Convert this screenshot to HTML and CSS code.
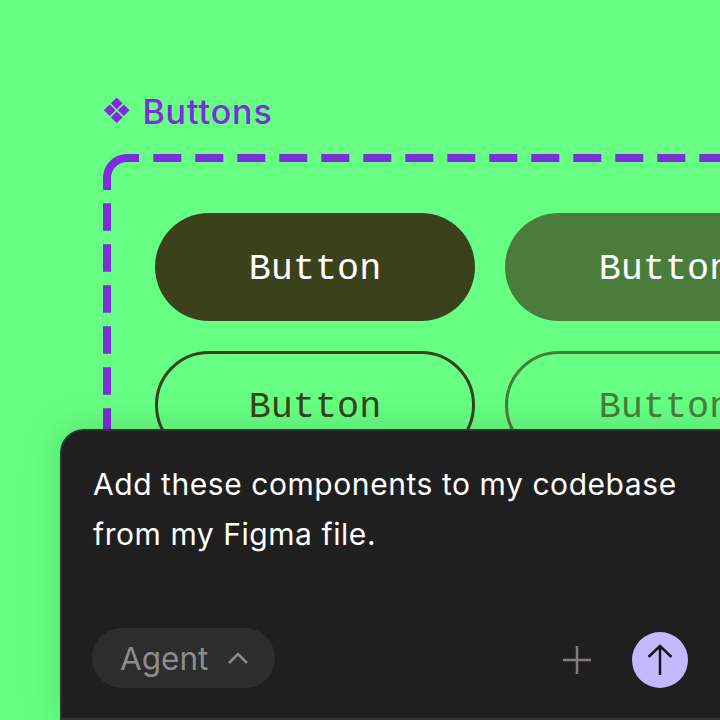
FILE: index.html
```html
<!DOCTYPE html>
<html lang="en">
<head>
    <meta charset="UTF-8">
    <meta name="viewport" content="width=device-width, initial-scale=1.0">
    <title>Buttons</title>
    <link rel="stylesheet" href="styles.css">
</head>
<body>

    <!-- Figma canvas -->
    <main class="canvas">
        <h2 class="frame-label"><span class="frame-icon">❖</span>Buttons</h2>

        <section class="frame">
            <svg class="frame-border" width="800" height="500" aria-hidden="true" fill="none" stroke="#7f2cdb" stroke-width="8">
                <path d="M4 36 V24 A20 20 0 0 1 24 4 H36"/>
                <path d="M50.300 4 H800" stroke-dasharray="28 14"/>
                <path d="M4 49.300 V500" stroke-dasharray="27.500 13.500"/>
            </svg>
            <div class="button-grid">
                <button class="btn btn-solid">Button</button>
                <button class="btn btn-solid btn-disabled">Button</button>
                <button class="btn btn-outline">Button</button>
                <button class="btn btn-outline btn-disabled">Button</button>
            </div>
        </section>
    </main>

    <!-- Chat prompt box -->
    <div class="prompt">
        <p class="prompt-text">Add these components to my codebase from my Figma file.</p>
        <div class="prompt-bar">
            <div class="agent-pill">
                Agent
                <svg width="20" height="12" viewBox="0 0 20 12" fill="none" stroke="#8c8c8c" stroke-width="2.5">
                    <path d="M1 11 L10 2 L19 11"/>
                </svg>
            </div>
            <div class="prompt-actions">
                <svg width="28" height="28" viewBox="0 0 28 28" stroke="#857b7b" stroke-width="2.500">
                    <path d="M14 0 V28 M0 14 H28"/>
                </svg>
                <button class="send-btn">
                    <svg width="26" height="32" viewBox="0 0 26 32" fill="none" stroke="#151515" stroke-width="2.500">
                        <path d="M1.500 13 L13 2 L24.500 13 M13 2 V31"/>
                    </svg>
                </button>
            </div>
        </div>
    </div>

</body>
</html>
```

FILE: styles.css
```css
html, body {
    margin: 0;
    height: 100%;
    overflow: hidden;
}

body {
    background-color: #66ff83;
    font-family: "Inter", "Liberation Sans", sans-serif;
}

.canvas {
    padding: 91px 0 0 103px;
}

.frame-label {
    margin: 0 0 23px 0;
    display: flex;
    align-items: center;
    gap: 10px;
    height: 40px;
    color: #7f2cdb;
    font-size: 34px;
    font-weight: 500;
    letter-spacing: 0.9px;
}

.frame-icon {
    margin-left: -2px;
    font-family: "DejaVu Sans", sans-serif;
    font-size: 35px;
    font-weight: 400;
    letter-spacing: 0;
}

.frame {
    position: relative;
    width: 800px;
    height: 500px;
    box-sizing: border-box;
    padding: 59px 0 0 52px;
}

.frame-border {
    position: absolute;
    top: 0;
    left: 0;
}

.button-grid {
    display: grid;
    grid-template-columns: 320px 320px;
    grid-auto-rows: 108px;
    gap: 30px;
}

.btn {
    border-radius: 54px;
    font-family: "Liberation Mono", monospace;
    font-size: 36.8px;
    box-sizing: border-box;
    padding: 4px 0 0 0;
}

.btn-solid {
    background-color: #3b421b;
    color: #ffffff;
    border: none;
}

.btn-solid.btn-disabled {
    background-color: #4a7d3c;
}

.btn-outline {
    background: none;
    color: #3b421b;
    border: 3px solid #3b421b;
}

.btn-outline.btn-disabled {
    color: #4a7d3c;
    border-color: #4a7d3c;
}

.prompt {
    position: absolute;
    top: 429px;
    left: 60px;
    width: 720px;
    height: 291px;
    box-sizing: border-box;
    padding: 28px 32px 30px 31px;
    display: flex;
    flex-direction: column;
    justify-content: space-between;
    background-color: #1f1f1f;
    border: 2px solid #333333;
    border-radius: 24px 24px 0 0;
    box-shadow: 0 0 40px rgba(0, 0, 0, 0.15);
}

.prompt-text {
    margin: 0;
    width: 610px;
    color: #ffffff;
    font-size: 30px;
    line-height: 50px;
    letter-spacing: 0.56px;
}

.prompt-bar {
    display: flex;
    justify-content: space-between;
    align-items: flex-end;
    width: 595px;
}

.agent-pill {
    display: flex;
    align-items: center;
    gap: 20px;
    height: 60px;
    padding: 0 27px 0 28px;
    border-radius: 30px;
    background-color: #2d2d2d;
    color: #8c8c8c;
    font-size: 31.5px;
    margin-left: -1px;
}

.prompt-actions {
    display: flex;
    align-items: center;
    gap: 41px;
}

.send-btn {
    display: flex;
    align-items: center;
    justify-content: center;
    width: 56px;
    height: 56px;
    padding: 0;
    border: none;
    border-radius: 50%;
    background-color: #c4b8ff;
}
```
